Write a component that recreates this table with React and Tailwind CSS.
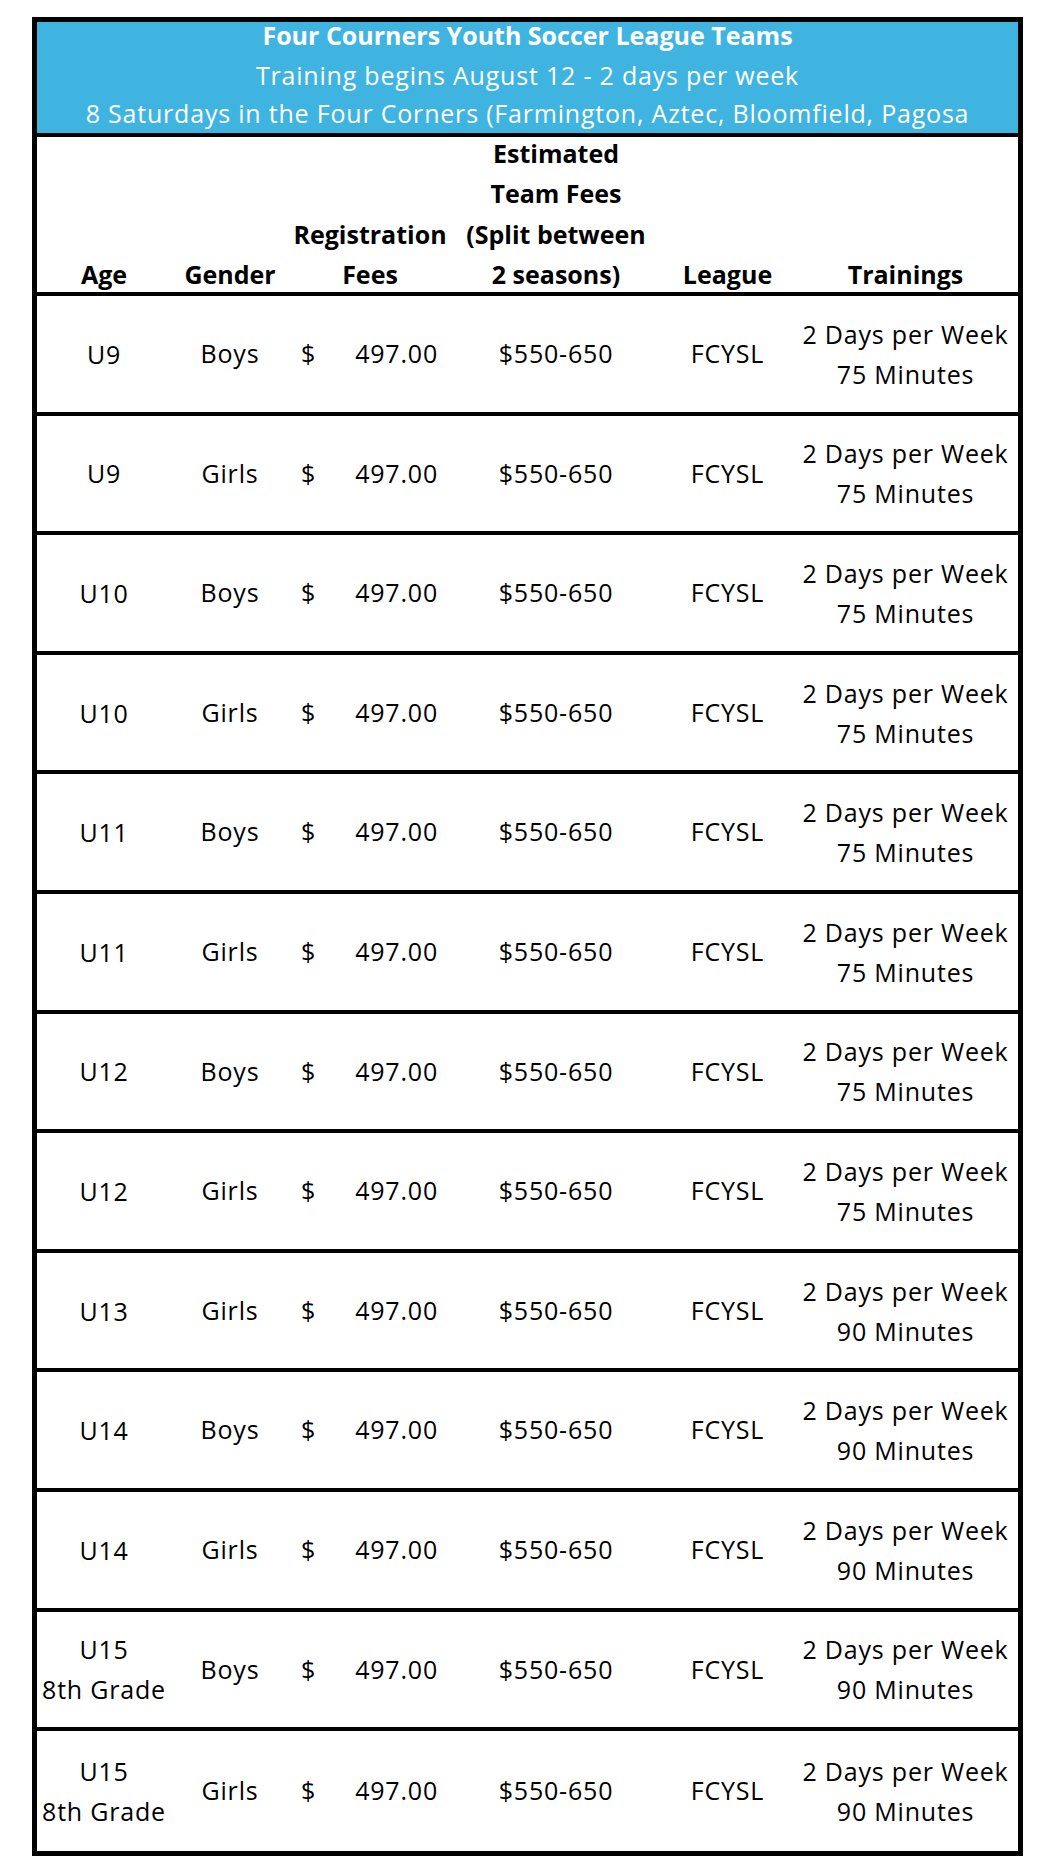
const rows = [
  ['U9', 'Boys', '75'],
  ['U9', 'Girls', '75'],
  ['U10', 'Boys', '75'],
  ['U10', 'Girls', '75'],
  ['U11', 'Boys', '75'],
  ['U11', 'Girls', '75'],
  ['U12', 'Boys', '75'],
  ['U12', 'Girls', '75'],
  ['U13', 'Girls', '90'],
  ['U14', 'Boys', '90'],
  ['U14', 'Girls', '90'],
  ['U15|8th Grade', 'Boys', '90'],
  ['U15|8th Grade', 'Girls', '90'],
];

const cols = 'grid grid-cols-[134px_118px_162px_210px_133px_223px]';

function HeadCell({ lines }) {
  return (
    <div className="flex flex-col justify-end items-center min-h-0">
      <div className="-mb-[2.5px] leading-[40.5px] text-center whitespace-nowrap">
        {lines.map(l => (
          <div key={l}>{l}</div>
        ))}
      </div>
    </div>
  );
}

export default function App() {
  return (
    <div className="bg-white w-[1044px] min-h-[1866px] pt-[17px] pl-[32px] text-black text-[25px] font-['Open_Sans','Lato',sans-serif]">
      <div className="w-[991px] border-[5px] border-black">
        {/* Title band */}
        <div className="h-[115px] bg-[#40b4e0] border-b-4 border-black text-white text-center whitespace-nowrap">
          <div className="font-bold leading-[26px]">Four Courners Youth Soccer League Teams</div>
          <div className="mt-[6.5px] leading-[40px] tracking-[0.8px]">Training begins August 12 - 2 days per week</div>
          <div className="leading-[36px] tracking-[0.8px]">8 Saturdays in the Four Corners (Farmington, Aztec, Bloomfield, Pagosa</div>
        </div>

        {/* Column headers */}
        <div className={`${cols} grid-rows-[155px] h-[159px] border-b-4 border-black font-bold`}>
          <HeadCell lines={['Age']} />
          <HeadCell lines={['Gender']} />
          <HeadCell lines={['Registration', 'Fees']} />
          <HeadCell lines={['Estimated', 'Team Fees', '(Split between', '2 seasons)']} />
          <HeadCell lines={['League']} />
          <HeadCell lines={['Trainings']} />
        </div>

        {/* Teams */}
        {rows.map(([age, gender, mins], i) => (
          <div
            key={i}
            className={`${cols} h-[119.6px] items-center tracking-[0.8px] ${i < rows.length - 1 ? 'border-b-4 border-black' : ''}`}
          >
            <div className="text-center leading-[40px] whitespace-nowrap">
              {age.split('|').map(a => (
                <div key={a}>{a}</div>
              ))}
            </div>
            <div className="text-center">{gender}</div>
            <div className="flex justify-between pl-[12px] pr-[13px]">
              <span>$</span>
              <span>497.00</span>
            </div>
            <div className="text-center">$550-650</div>
            <div className="text-center">FCYSL</div>
            <div className="text-center leading-[40px] whitespace-nowrap">
              <div>2 Days per Week</div>
              <div>{mins} Minutes</div>
            </div>
          </div>
        ))}
      </div>
    </div>
  );
}
